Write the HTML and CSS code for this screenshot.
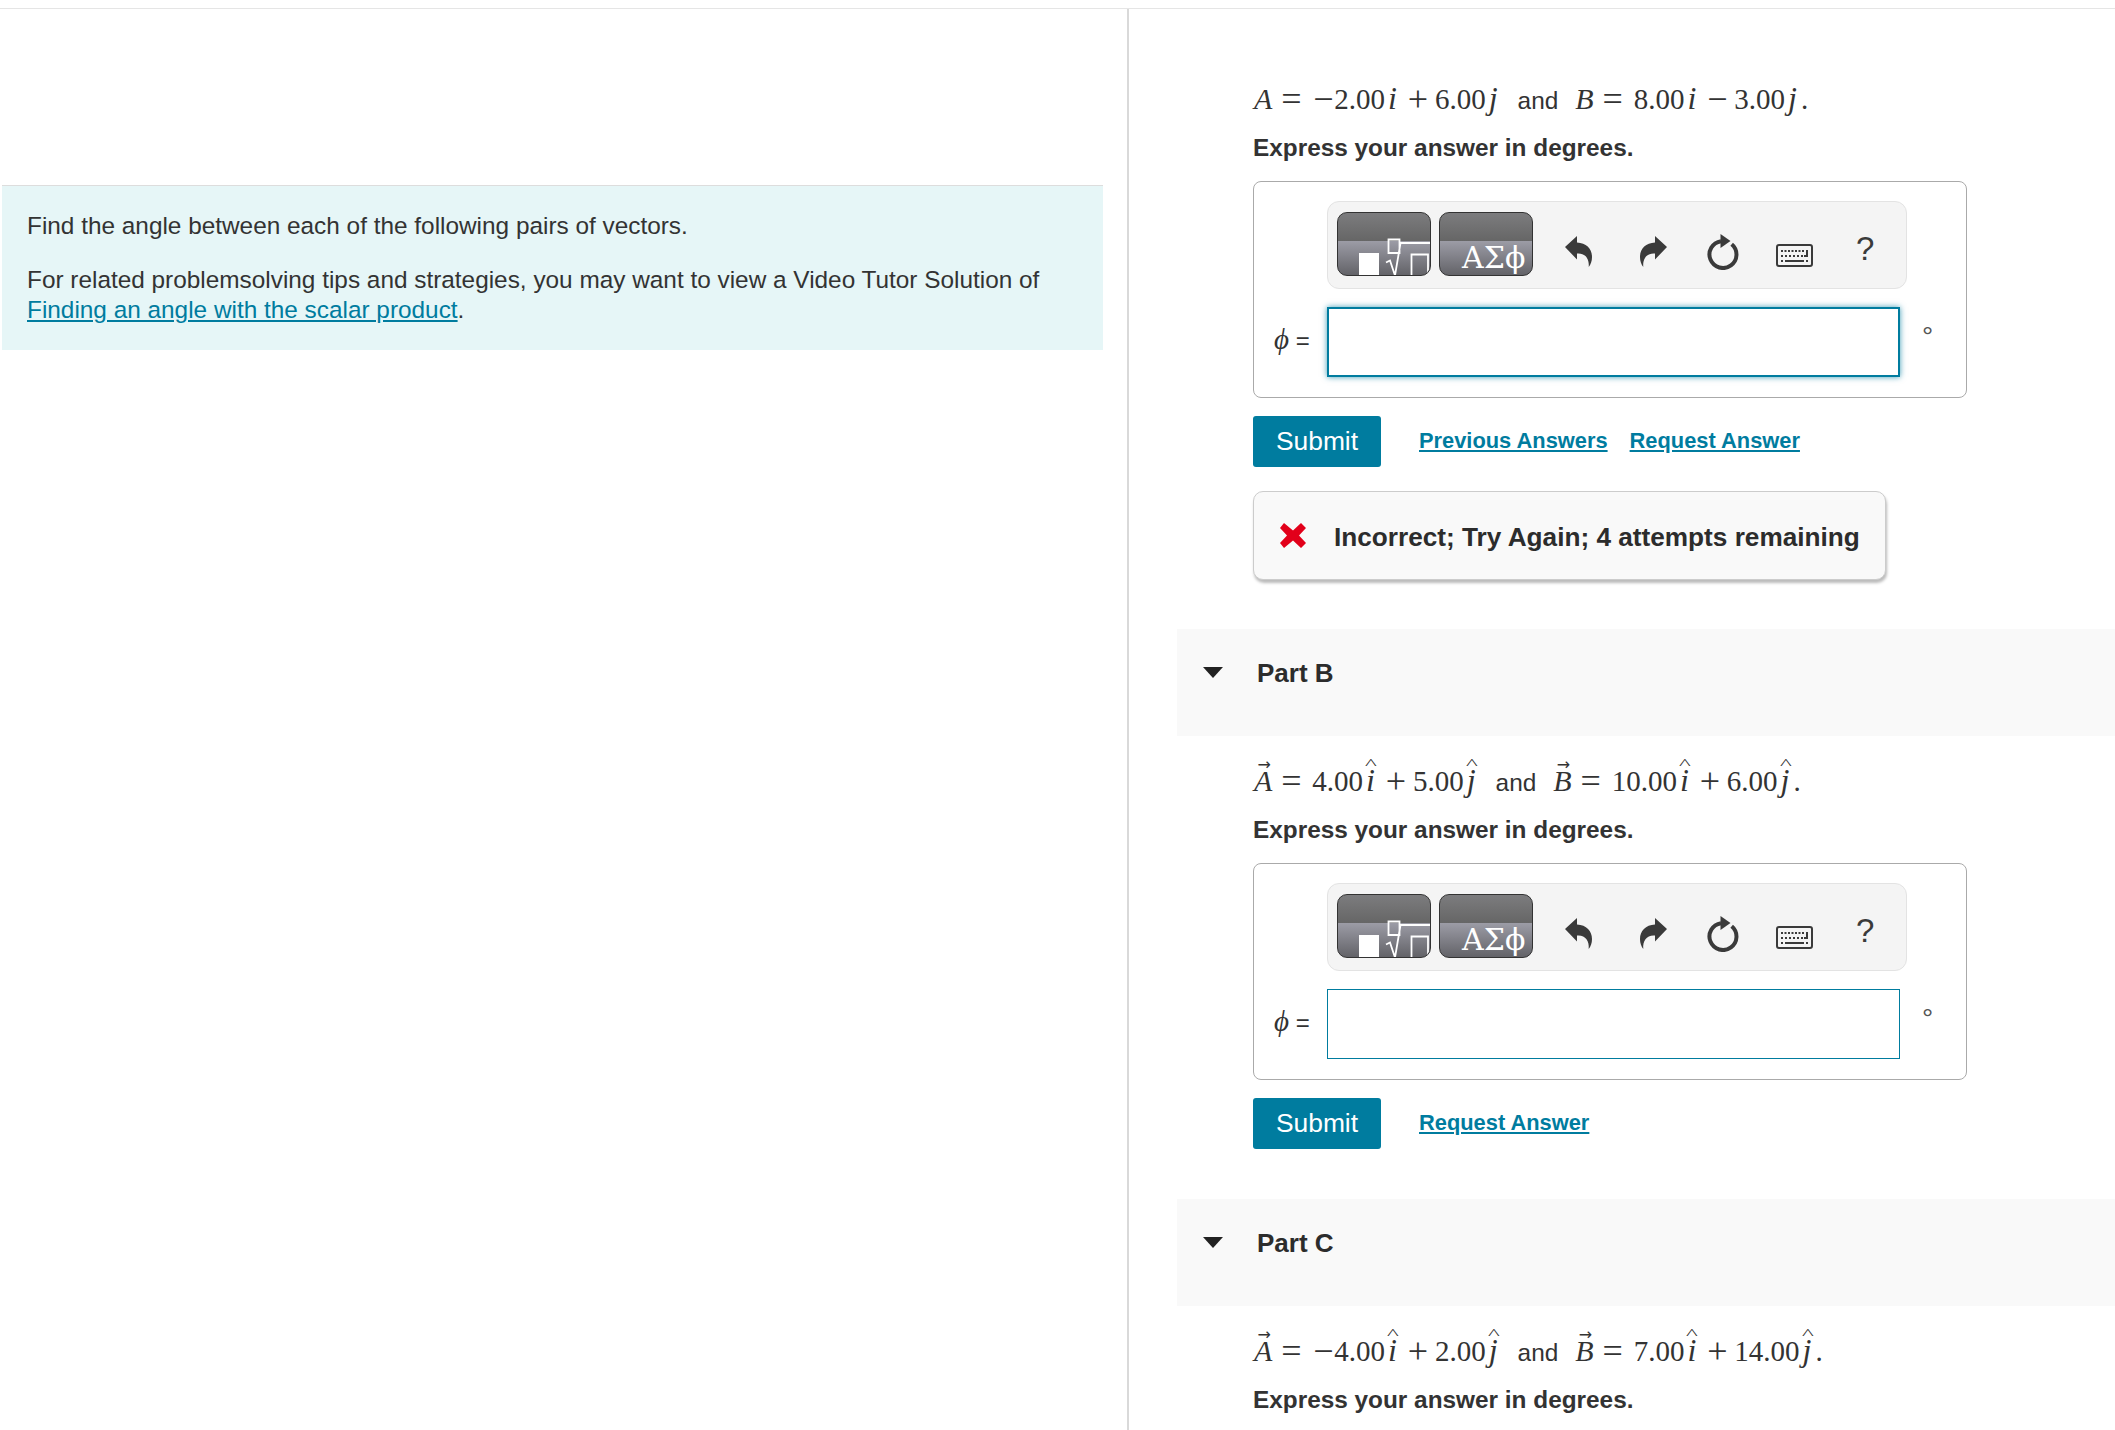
FILE: index.html
```html
<!DOCTYPE html>
<html lang="en">
<head>
    <meta charset="UTF-8">
    <meta name="viewport" content="width=device-width, initial-scale=1.0">
    <title>Find the angle</title>
    <link rel="stylesheet" href="styles.css">
</head>
<body>
    <svg class="icon-defs" width="0" height="0">
        <symbol id="ico-undo" viewBox="0 0 27 31"><path d="M0 11 12 0v6.500c9.500.5 15 6.500 15 14.500 0 4-1.200 7.500-3.300 10 .8-8-3.200-13.500-10.200-13.500H12V23.500z"/></symbol>
        <symbol id="ico-redo" viewBox="0 0 27 31"><path d="M27 11 15 0v6.500C5.500 7 0 13 0 21c0 4 1.200 7.500 3.300 10-.8-8 3.200-13.500 10.200-13.500H15V23.500z"/></symbol>
        <symbol id="ico-reload" viewBox="0 0 32 37"><path d="M24.700 11.200A13.500 13.500 0 1 1 14 8.150" fill="none" stroke="currentColor" stroke-width="4"/><path d="M13.500 1 23.500 8 13.500 15z"/></symbol>
        <symbol id="ico-keys" viewBox="0 0 37 23">
            <rect x="1" y="1" width="35" height="21" rx="2" fill="none" stroke="currentColor" stroke-width="2"/>
            <path d="M5 6h2v2H5zM8.500 6h2v2h-2zM12 6h2v2h-2zM15.500 6h2v2h-2zM19 6h2v2h-2zM22.500 6h2v2h-2zM26 6h2v2h-2zM30 6h2v7h-4v-2h2zM5 11h2v2H5zM9 11h2v2H9zM13 11h2v2h-2zM17 11h2v2h-2zM21 11h2v2h-2zM25 11h2v2h-2zM5 16h2v2H5zM9 16h19v2H9zM30 16h2v2h-2z"/>
        </symbol>
        <symbol id="ico-templates" viewBox="0 0 93 63">
            <path d="M21 40h20v23H21z" fill="#fff"/>
            <path d="M50.500 26.500h11v13.500h-11zM48 49.500l4-2 5 15 5.500-32.500h30.500M73.500 63V41.500h16.500V63" fill="none" stroke="#fff" stroke-width="1.800"/>
        </symbol>
    </svg>

    <div class="page">
        <!-- left column -->
        <div class="intro-col">
            <div class="intro">
                <p>Find the angle between each of the following pairs of vectors.</p>
                <p>For related problemsolving tips and strategies, you may want to view a Video Tutor Solution of <a href="#">Finding an angle with the scalar product</a>.</p>
            </div>
        </div>

        <!-- right column -->
        <div class="parts-col">
            <div class="part-body first">
                <div class="math"><i>A</i><b class="rel">=</b><b>&minus;</b>2.00<i class="u">i</i><b class="bin">+</b>6.00<i class="u">j</i><span class="and">and</span><i>B</i><b class="rel">=</b>8.00<i class="u">i</i><b class="bin">&minus;</b>3.00<i class="u">j</i>.</div>
                <p class="hint">Express your answer in degrees.</p>
                <div class="answer-box">
                    <div class="toolbar">
                        <span class="tpl"><svg class="tpl-ico"><use href="#ico-templates"/></svg></span>
                        <span class="tpl tpl-greek">&Alpha;&Sigma;&#981;</span>
                        <svg class="tool tool-undo"><use href="#ico-undo"/></svg>
                        <svg class="tool tool-redo"><use href="#ico-redo"/></svg>
                        <svg class="tool tool-reload"><use href="#ico-reload"/></svg>
                        <svg class="tool tool-keys"><use href="#ico-keys"/></svg>
                        <span class="tool-help">?</span>
                    </div>
                    <div class="answer-row">
                        <span class="phi"><i>&#981;</i> =</span>
                        <input class="answer focused" type="text">
                        <span class="deg">&deg;</span>
                    </div>
                </div>
                <div class="actions">
                    <button class="submit">Submit</button>
                    <a href="#" class="act-link">Previous Answers</a>
                    <a href="#" class="act-link">Request Answer</a>
                </div>
                <div class="feedback">
                    <svg class="wrong" viewBox="0 0 26 25"><path d="M0 5 4 0l9 7.500L21 0l5 5-7 7.500L26 20l-5 5-8-7.500L4 25l-4-5 7-7.500z"/></svg>
                    <span class="feedback-text">Incorrect; Try Again; 4 attempts remaining</span>
                </div>
            </div>

            <div class="part-head"><span class="caret"></span>Part B</div>
            <div class="part-body">
                <div class="math"><i class="acc vec">A</i><b class="rel">=</b>4.00<i class="u acc hat">i</i><b class="bin">+</b>5.00<i class="u acc hat">j</i><span class="and">and</span><i class="acc vec">B</i><b class="rel">=</b>10.00<i class="u acc hat">i</i><b class="bin">+</b>6.00<i class="u acc hat">j</i>.</div>
                <p class="hint">Express your answer in degrees.</p>
                <div class="answer-box">
                    <div class="toolbar">
                        <span class="tpl"><svg class="tpl-ico"><use href="#ico-templates"/></svg></span>
                        <span class="tpl tpl-greek">&Alpha;&Sigma;&#981;</span>
                        <svg class="tool tool-undo"><use href="#ico-undo"/></svg>
                        <svg class="tool tool-redo"><use href="#ico-redo"/></svg>
                        <svg class="tool tool-reload"><use href="#ico-reload"/></svg>
                        <svg class="tool tool-keys"><use href="#ico-keys"/></svg>
                        <span class="tool-help">?</span>
                    </div>
                    <div class="answer-row">
                        <span class="phi"><i>&#981;</i> =</span>
                        <input class="answer" type="text">
                        <span class="deg">&deg;</span>
                    </div>
                </div>
                <div class="actions">
                    <button class="submit">Submit</button>
                    <a href="#" class="act-link">Request Answer</a>
                </div>
            </div>

            <div class="part-head"><span class="caret"></span>Part C</div>
            <div class="part-body">
                <div class="math"><i class="acc vec">A</i><b class="rel">=</b><b>&minus;</b>4.00<i class="u acc hat">i</i><b class="bin">+</b>2.00<i class="u acc hat">j</i><span class="and">and</span><i class="acc vec">B</i><b class="rel">=</b>7.00<i class="u acc hat">i</i><b class="bin">+</b>14.00<i class="u acc hat">j</i>.</div>
                <p class="hint">Express your answer in degrees.</p>
            </div>
        </div>
    </div>
</body>
</html>
```

FILE: styles.css
```css
html, body {
    margin: 0;
    padding: 0;
    height: 100%;
    overflow: hidden;
    background-color: #ffffff;
}
body {
    font-family: "Liberation Sans", Arial, sans-serif;
    font-size: 24.36px;
    color: #333333;
}
a {
    color: #007c9f;
}
.icon-defs {
    position: absolute;
}
.page {
    display: flex;
    height: 1422px;
    margin-top: 8px;
    border-top: 1px solid #e5e5e5;
}
.intro-col {
    width: 1129px;
    flex: none;
    box-sizing: border-box;
    border-right: 2px solid #d9d9d9;
    padding: 176px 24px 0 2px;
}
.intro {
    background-color: #e6f6f7;
    border-top: 1px solid #dddddd;
    height: 165px;
    box-sizing: border-box;
    padding: 25px 40px 0 25px;
    line-height: 30px;
}
.intro p {
    margin: 0 0 24px;
}
.parts-col {
    flex: 1;
    min-width: 0;
}
.part-body {
    padding: 0 0 0 124px;
}
.part-body.first {
    padding-top: 69px;
    height: 620px;
    box-sizing: border-box;
}
.math {
    font-family: "Liberation Serif", "Times New Roman", serif;
    font-size: 29px;
    line-height: 40px;
    height: 40px;
    white-space: nowrap;
}
.math i {
    margin: 0 2px 0 1px;
    font-size: 30px;
}
.math .u {
    margin: 0 4px 0 3px;
    font-size: 32px;
}
.math b {
    display: inline-block;
    width: 22px;
    text-align: center;
    font-weight: normal;
    font-size: 36px;
    line-height: 30px;
    vertical-align: -2px;
}
.math .rel {
    margin: 0 10px 0 6px;
}
.math .bin {
    margin: 0 6px 0 6px;
}
.math .and {
    font-family: "Liberation Sans", Arial, sans-serif;
    font-size: 24.4px;
    margin: 0 16px;
}
.acc {
    position: relative;
}
.acc::before {
    position: absolute;
    left: 0;
    right: 0;
    text-align: center;
    font-style: normal;
    line-height: 20px;
}
.vec::before {
    content: "\2192";
    font-family: "DejaVu Sans", sans-serif;
    top: -9px;
    left: 2px;
    font-size: 16px;
}
.hat::before {
    content: "\5E";
    top: -8px;
    font-size: 20px;
    transform: scale(1.25, 0.7);
}
.hint {
    margin: 15px 0 0;
    font-weight: bold;
    line-height: 30px;
}
.answer-box {
    width: 714px;
    height: 217px;
    box-sizing: border-box;
    margin-top: 18px;
    border: 1px solid #aaaaaa;
    border-radius: 8px;
    padding: 19px 0 0 73px;
}
.toolbar {
    display: flex;
    align-items: center;
    width: 580px;
    height: 88px;
    box-sizing: border-box;
    background-color: #f4f4f4;
    border: 1px solid #e3e3e3;
    border-radius: 12px;
    padding-left: 9px;
}
.tpl {
    width: 94px;
    height: 64px;
    box-sizing: border-box;
    flex: none;
    margin: 0 8px 2px 0;
    border: 1px solid #333333;
    border-radius: 10px;
    overflow: hidden;
    background: linear-gradient(#7c7c7e 0, #666666 45%, #9c9ca6 45%, #636368 100%);
    display: block;
}
.tpl-ico {
    display: block;
    width: 93px;
    height: 63px;
}
.tpl-greek {
    color: #ffffff;
    font-family: "DejaVu Serif", "Liberation Serif", serif;
    font-size: 30px;
    line-height: 30px;
    padding: 30px 0 0 22px;
    white-space: nowrap;
}
.tool {
    display: block;
    flex: none;
    fill: #3a3a3a;
    color: #3a3a3a;
}
.tool-undo {
    width: 27px;
    height: 31px;
    margin: 12px 0 0 24px;
}
.tool-redo {
    width: 27px;
    height: 31px;
    margin: 12px 0 0 48px;
}
.tool-reload {
    width: 32px;
    height: 37px;
    margin: 12px 0 0 40px;
}
.tool-keys {
    width: 37px;
    height: 23px;
    margin: 20px 0 0 37px;
}
.tool-help {
    font-size: 33px;
    margin: 8px 0 0 43px;
    color: #3a3a3a;
}
.answer-row {
    display: flex;
    margin-top: 18px;
    margin-left: -73px;
}
.phi {
    width: 73px;
    box-sizing: border-box;
    padding-left: 20px;
    line-height: 65px;
    font-size: 24px;
    white-space: nowrap;
}
.phi i {
    font-family: "Liberation Serif", serif;
    font-size: 29px;
}
.answer {
    width: 573px;
    height: 70px;
    box-sizing: border-box;
    margin: 0;
    border: 1px solid #007c9f;
    border-radius: 0;
    outline: none;
    background: #ffffff;
    padding: 0;
}
.answer.focused {
    border-width: 2px;
    box-shadow: 0 0 6px rgba(0, 124, 159, 0.75);
}
.deg {
    margin: 14px 0 0 22px;
    font-size: 28px;
    color: #555555;
}
.actions {
    display: flex;
    align-items: center;
    margin-top: 18px;
}
.submit {
    width: 128px;
    height: 51px;
    margin-right: 38px;
    padding: 0;
    border: none;
    border-radius: 3px;
    background-color: #007c9f;
    color: #ffffff;
    font-family: inherit;
    font-size: 26.4px;
}
.act-link {
    font-weight: bold;
    font-size: 21.85px;
    margin: -2px 22px 0 0;
}
.feedback {
    display: flex;
    align-items: center;
    width: 633px;
    height: 89px;
    box-sizing: border-box;
    margin-top: 24px;
    padding-left: 26px;
    background-color: #f9f9f9;
    border: 1px solid #cccccc;
    border-radius: 10px;
    box-shadow: 1px 3px 3px #bbbbbb;
    font-size: 26.2px;
    font-weight: bold;
    white-space: nowrap;
    color: #2c2c2c;
}
.feedback-text {
    padding-top: 4px;
}
.wrong {
    width: 26px;
    height: 25px;
    margin-right: 28px;
    fill: #e2001a;
    flex: none;
}
.part-head {
    display: flex;
    align-items: flex-start;
    height: 107px;
    box-sizing: border-box;
    margin-left: 48px;
    padding: 27px 0 0 26px;
    background-color: #f9f9f9;
    font-size: 26px;
    font-weight: bold;
    line-height: 34px;
    color: #2c2c2c;
}
.caret {
    width: 0;
    height: 0;
    margin: 11px 34px 0 0;
    border-left: 10px solid transparent;
    border-right: 10px solid transparent;
    border-top: 11px solid #222222;
}
.part-head + .part-body {
    padding-top: 24px;
}
.part-head + .part-body .actions {
    margin-bottom: 50px;
}
```
